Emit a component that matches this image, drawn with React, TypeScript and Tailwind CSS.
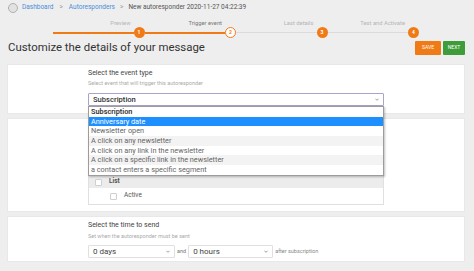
import React from "react";

const ORANGE = "bg-[#f07b16]";

function Chevron({ className = "" }: { className?: string }) {
  return (
    <svg viewBox="0 0 10 6" className={className} fill="none" stroke="#666" strokeWidth="1.6">
      <path d="M1 1l4 4 4-4" />
    </svg>
  );
}

function Step({
  label,
  n,
  state,
  lineDone,
  labelDark,
}: {
  label: string;
  n: number;
  state: "done" | "current";
  lineDone: boolean;
  labelDark?: boolean;
}) {
  return (
    <div className="flex flex-col">
      <div
        className={`h-[7px] leading-[7px] text-[5.8px] text-right pr-[14px] ${
          labelDark ? "text-[#777]" : "text-[#b5b5b5]"
        }`}
      >
        {label}
      </div>
      <div className="flex items-center h-[11px]">
        <div className={`flex-1 ${lineDone ? "h-[2px] bg-[#f07b16]" : "h-px bg-[#dcdcdc]"}`} />
        {state === "done" ? (
          <div className={`w-[11px] h-[11px] rounded-full ${ORANGE} flex items-center justify-center text-white text-[5px] font-bold`}>
            {n}
          </div>
        ) : (
          <div className="w-[11px] h-[11px] rounded-full bg-white border border-[#f07b16] flex items-center justify-center text-[#f07b16] text-[5px] font-bold">
            {n}
          </div>
        )}
      </div>
    </div>
  );
}

export default function App() {
  const items = [
    "Subscription",
    "Anniversary date",
    "Newsletter open",
    "A click on any newsletter",
    "A click on any link in the newsletter",
    "A click on a specific link in the newsletter",
    "a contact enters a specific segment",
  ];
  return (
    <div
      className="w-[474px] h-[271px] bg-[#eeeeee] overflow-hidden flex flex-col"
      style={{ fontFamily: "Roboto, 'Liberation Sans', sans-serif" }}
    >
      {/* breadcrumb */}
      <div className="h-[14px] flex items-center pl-[8px] pt-[1px] text-[6.5px]">
        <div className="w-[10px] h-[10px] rounded-full border-[1.5px] border-[#b0b0b0] bg-[#e2e2e2]" />
        <span className="ml-[4px] text-[#4a8fd6]">Dashboard</span>
        <span className="mx-[6px] text-[#999]">&gt;</span>
        <span className="text-[#4a8fd6]">Autoresponders</span>
        <span className="mx-[5px] text-[#999]">&gt;</span>
        <span className="text-[#555]">New autoresponder 2020-11-27 04:22:39</span>
      </div>

      {/* stepper */}
      <div className="h-[26px] pt-[6px] pl-[53px]">
        <div className="w-[366px] grid grid-cols-4">
          <Step label="Preview" n={1} state="done" lineDone />
          <Step label="Trigger event" n={2} state="current" lineDone labelDark />
          <Step label="Last details" n={3} state="done" lineDone={false} />
          <Step label="Test and Activate" n={4} state="done" lineDone={false} />
        </div>
      </div>

      {/* title row */}
      <div className="mt-[1px] h-[14px] flex items-center justify-between pl-[8px] pr-[9px]">
        <div className="text-[11.4px] text-[#333] leading-none">Customize the details of your message</div>
        <div className="flex gap-[2px]">
          <div className="w-[26px] h-[14px] bg-[#f07b16] text-white text-[5px] flex items-center justify-center rounded-[1px]">
            SAVE
          </div>
          <div className="w-[22px] h-[14px] bg-[#3f9c3a] text-white text-[5px] flex items-center justify-center rounded-[1px]">
            NEXT
          </div>
        </div>
      </div>

      {/* card 1 */}
      <div className="relative z-10 ml-[7px] w-[458px] mt-[9px] h-[50px] bg-white border border-[#e8e8e8] pl-[80px] pt-[3px]">
        <div className="h-[10px] leading-[10px] text-[7px] text-[#444]">Select the event type</div>
        <div className="mt-[1px] h-[8px] leading-[8px] text-[5.5px] text-[#aaa]">
          Select event that will trigger this autoresponder
        </div>
        <div className="relative mt-[6px] w-[296px]">
          <div className="h-[13px] border border-[#a9a4c9] rounded-[1px] flex items-center justify-between px-[4px]">
            <span className="text-[7.6px] font-medium text-[#333]">Subscription</span>
            <Chevron className="w-[4px] h-[3px]" />
          </div>
          <div className="absolute left-0 top-full w-[296px] bg-white border border-[#9c9c9c] shadow-[1px_1px_2px_rgba(0,0,0,0.25)]">
            {items.map((t, i) => (
              <div
                key={t}
                className={`h-[9.7px] leading-[9.7px] pl-[2px] text-[7.3px] ${
                  i === 1
                    ? "bg-[#1e8ffe] text-white"
                    : i === 3 || i === 5
                    ? "bg-[#f3f3f3] text-[#666]"
                    : i === 0
                    ? "text-[#333] font-semibold"
                    : "text-[#666]"
                }`}
              >
                {t}
              </div>
            ))}
          </div>
        </div>
      </div>

      {/* card 2 */}
      <div className="ml-[7px] w-[458px] mt-[4px] h-[94px] bg-white border border-[#e8e8e8] pl-[80px] pt-[56px]">
        <div className="w-[296px] border border-[#e0e0e0]">
          <div className="h-[12px] bg-[#ececec] flex items-center pl-[6px]">
            <div className="w-[7px] h-[7px] border border-[#cfcfcf] bg-white rounded-[1px]" />
            <span className="ml-[7px] text-[6.5px] font-bold text-[#555]">List</span>
          </div>
          <div className="h-[16px] flex items-center pl-[21px]">
            <div className="w-[7px] h-[7px] border border-[#cfcfcf] bg-white rounded-[1px]" />
            <span className="ml-[7px] text-[6.5px] text-[#555]">Active</span>
          </div>
        </div>
      </div>

      {/* card 3 */}
      <div className="ml-[7px] w-[458px] mt-[4px] h-[46px] bg-white border border-[#e8e8e8] pl-[80px] pt-[4px]">
        <div className="h-[8px] leading-[8px] text-[7px] text-[#444]">Select the time to send</div>
        <div className="mt-[3px] h-[8px] leading-[8px] text-[5.5px] text-[#aaa]">
          Set when the autoresponder must be sent
        </div>
        <div className="mt-[5px] flex items-center">
          <div className="w-[87px] h-[13px] border border-[#e0e0e0] rounded-[1px] flex items-center justify-between px-[4px]">
            <span className="text-[8px] text-[#444]">0 days</span>
            <Chevron className="w-[4px] h-[3px]" />
          </div>
          <span className="mx-[2px] text-[5.5px] text-[#777]">and</span>
          <div className="w-[85px] h-[13px] border border-[#e0e0e0] rounded-[1px] flex items-center justify-between px-[4px]">
            <span className="text-[8px] text-[#444]">0 hours</span>
            <Chevron className="w-[4px] h-[3px]" />
          </div>
          <span className="ml-[2px] text-[5.5px] text-[#888]">after subscription</span>
        </div>
      </div>
    </div>
  );
}
